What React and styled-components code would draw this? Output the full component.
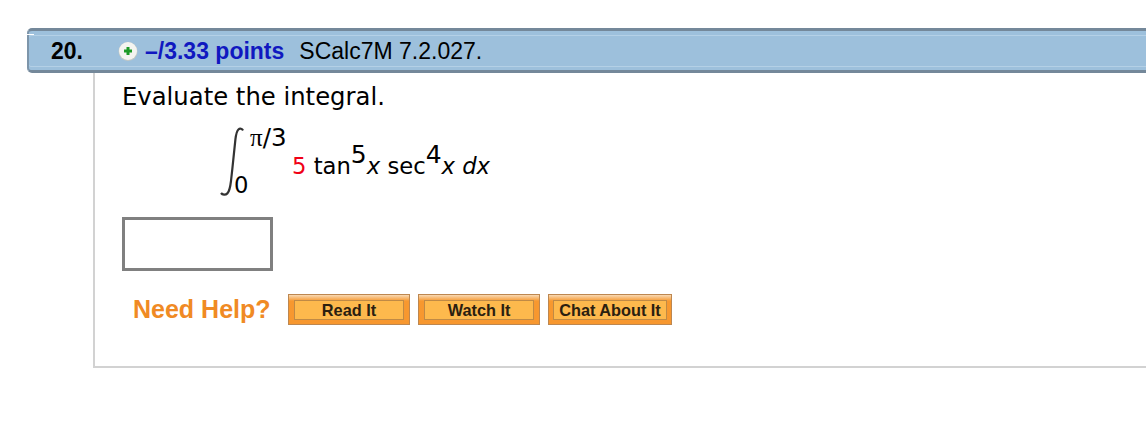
import React from "react";
import styled, { createGlobalStyle } from "styled-components";

const Global = createGlobalStyle`
  html, body {
    margin: 0;
    padding: 0;
    background: #fff;
  }
`;

const Page = styled.div`
  width: 1146px;
  height: 448px;
  padding: 28px 0 0 27px;
  box-sizing: border-box;
  overflow: hidden;
  font-family: "Liberation Sans", Arial, sans-serif;
`;

const Bar = styled.div`
  position: relative;
  height: 45px;
  box-sizing: border-box;
  display: flex;
  align-items: center;
  padding: 1px 0 0 22px;
  background: #9dc0dc;
  border-top: 3px solid #74889a;
  border-bottom: 3px solid #74889a;
  border-left: 2px solid #7d95aa;
  border-radius: 5px 0 0 5px;
  box-shadow: inset 0 4px 0 #9dc0dc, inset 0 5px 0 #b4d0e6, inset 0 -3px 0 #9dc0dc,
    inset 0 -4px 0 #b4d0e6;

  &::before {
    content: "";
    position: absolute;
    left: -2px;
    top: 3px;
    width: 7px;
    height: 1px;
    background: #fff;
  }
`;

const Number = styled.span`
  width: 66px;
  font-size: 23px;
  font-weight: bold;
  color: #000;
`;

const PlusBadge = styled.svg`
  width: 22px;
  height: 22px;
  margin: -1px 6px 0 0;
  flex: none;
`;

const Points = styled.span`
  font-size: 23px;
  font-weight: bold;
  color: #1018c0;
  margin-right: 15px;
`;

const Source = styled.span`
  font-size: 23px;
  color: #000;
`;

const Panel = styled.div`
  margin-left: 66px;
  height: 295px;
  box-sizing: border-box;
  border-left: 2px solid #d2d2d2;
  border-bottom: 2px solid #d2d2d2;
  padding: 9px 0 0 27px;
`;

const Prompt = styled.div`
  font-family: "DejaVu Sans", Verdana, sans-serif;
  font-size: 24.3px;
  line-height: 30px;
  color: #000;
`;

const Formula = styled.div`
  display: flex;
  align-items: flex-start;
  margin: 13px 0 0 96px;
  height: 73px;
  font-family: "DejaVu Sans", Verdana, sans-serif;
  font-size: 22.7px;
  color: #000;
`;

const IntegralSign = styled.svg`
  width: 26px;
  height: 73px;
  flex: none;
`;

const Limits = styled.div`
  display: flex;
  flex-direction: column;
  justify-content: space-between;
  width: 58px;
  height: 73px;
  margin-left: -10px;
  line-height: 26px;
`;

const Upper = styled.span`
  margin-left: 16px;
  font-size: 24.5px;
`;

const Pi = styled.span`
  font-family: "Liberation Serif", "Times New Roman", serif;
  font-size: 25px;
`;

const Expression = styled.div`
  margin-top: 28px;
  line-height: 26px;
  white-space: pre;
`;

const Coefficient = styled.span`
  color: #f00016;
`;

const Power = styled.span`
  position: relative;
  top: -11px;
  font-size: 25px;
`;

const Variable = styled.i`
  font-style: italic;
`;

const AnswerBox = styled.div`
  width: 151px;
  height: 54px;
  box-sizing: border-box;
  margin-top: 19px;
  border: 3px solid #808080;
  background: #fff;
`;

const HelpRow = styled.div`
  display: flex;
  align-items: center;
  margin: 23px 0 0 11px;
  height: 31px;
`;

const HelpLabel = styled.span`
  width: 155px;
  font-size: 25px;
  font-weight: bold;
  color: #f08a24;
`;

const HelpButton = styled.div`
  width: ${(p) => p.$width}px;
  height: 31px;
  box-sizing: border-box;
  margin-right: 8px;
  padding: 5px ${(p) => p.$inset}px 4px;
  border: 1px solid #bd8750;
  background: linear-gradient(#f8d9b4 0, #f7982f 6px, #f7972f 100%);
`;

const HelpFace = styled.div`
  height: 100%;
  box-sizing: border-box;
  display: flex;
  align-items: center;
  justify-content: center;
  border: 1px solid #c08a45;
  background: #fdb94d;
  font-size: 16.3px;
  font-weight: bold;
  color: #2a2010;
  white-space: nowrap;
`;

const buttons = [
  { label: "Read It", width: 122, inset: 5 },
  { label: "Watch It", width: 122, inset: 5 },
  { label: "Chat About It", width: 124, inset: 4 },
];

const App = () => {
  return (
    <>
      <Global />
      <Page>
        <Bar>
          <Number>20.</Number>
          <PlusBadge viewBox="0 0 22 22">
            <circle cx="11" cy="11.5" r="9.5" fill="#c4c8c4" />
            <circle cx="11" cy="11" r="9" fill="#f4f4f0" />
            <path d="M11 7v8M7 11h8" stroke="#1c9a26" strokeWidth="3" />
          </PlusBadge>
          <Points>–/3.33 points</Points>
          <Source>SCalc7M 7.2.027.</Source>
        </Bar>
        <Panel>
          <Prompt>Evaluate the integral.</Prompt>
          <Formula>
            <IntegralSign viewBox="0 0 26 73">
              <path
                d="M25 5.5c-.8-1.8-3-2.4-4.6-1-1.8 1.6-2.4 5-3 10C16 27 14.6 42 13 56c-.6 5-1.2 10-3.6 12.4-1.8 1.8-5 1.6-6.4-.4"
                fill="none"
                stroke="#333"
                strokeWidth="2.2"
              />
            </IntegralSign>
            <Limits>
              <Upper>
                <Pi>π</Pi>/3
              </Upper>
              <span>0</span>
            </Limits>
            <Expression>
              <Coefficient>5</Coefficient> tan<Power>5</Power>
              <Variable>x</Variable> sec<Power>4</Power>
              <Variable>x</Variable> <Variable>dx</Variable>
            </Expression>
          </Formula>
          <AnswerBox />
          <HelpRow>
            <HelpLabel>Need Help?</HelpLabel>
            {buttons.map((b) => (
              <HelpButton key={b.label} $width={b.width} $inset={b.inset}>
                <HelpFace>{b.label}</HelpFace>
              </HelpButton>
            ))}
          </HelpRow>
        </Panel>
      </Page>
    </>
  );
};

export default App;
